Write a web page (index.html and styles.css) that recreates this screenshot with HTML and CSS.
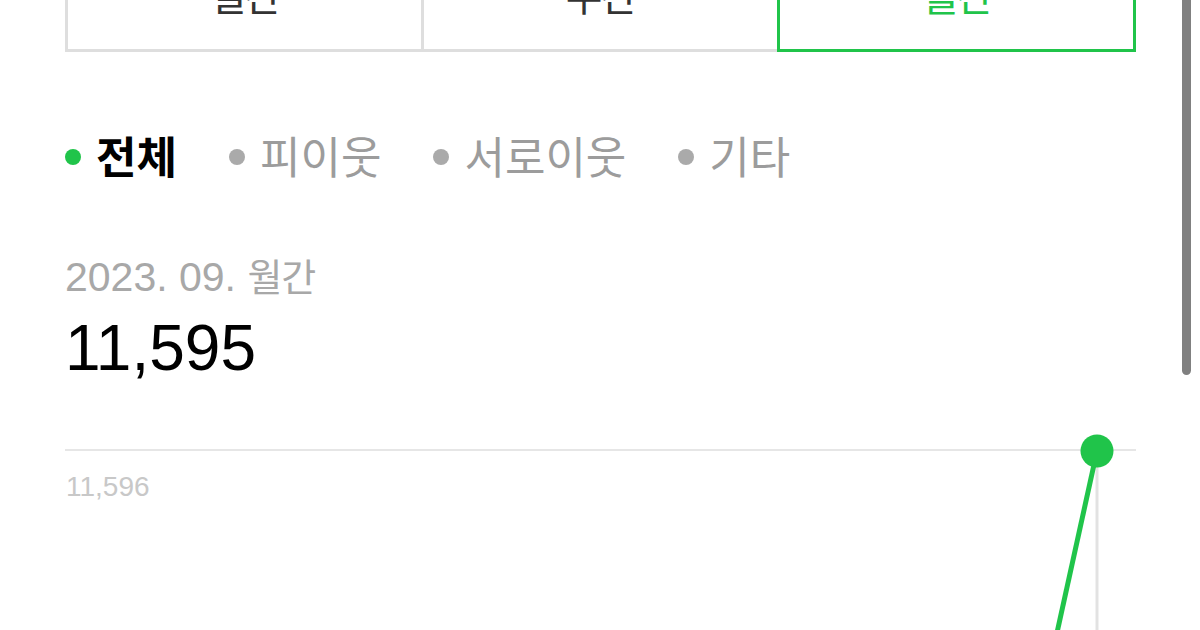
FILE: index.html
```html
<!DOCTYPE html>
<html lang="ko">
<head>
    <meta charset="UTF-8">
    <meta name="viewport" content="width=device-width, initial-scale=1.0">
    <title>방문 통계</title>
    <link rel="stylesheet" href="styles.css">
</head>

<body>

    <main class="stats">
        <!-- 기간 탭 -->
        <div class="tabs">
            <div class="tab">일간</div>
            <div class="tab">주간</div>
            <div class="tab active">월간</div>
        </div>

        <!-- 방문자 구분 -->
        <ul class="legend">
            <li class="legend-item on"><span class="dot"></span>전체</li>
            <li class="legend-item"><span class="dot"></span>피이웃</li>
            <li class="legend-item"><span class="dot"></span>서로이웃</li>
            <li class="legend-item"><span class="dot"></span>기타</li>
        </ul>

        <p class="period">2023. 09. <span class="ko">월간</span></p>
        <p class="total">11,595</p>

        <svg class="chart" width="1071" height="240" viewBox="0 0 1071 240">
            <line x1="0" y1="30" x2="1071" y2="30" stroke="#e6e6e6" stroke-width="2"/>
            <text x="1" y="76" class="axis-label">11,596</text>
            <line x1="1032" y1="31" x2="1032" y2="240" stroke="#e2e2e2" stroke-width="3"/>
            <line x1="1032" y1="31" x2="986" y2="240" stroke="#20c44a" stroke-width="5"/>
            <circle cx="1032" cy="31" r="16.5" fill="#20c44a"/>
        </svg>
    </main>

    <div class="scroll-indicator"></div>

</body>

</html>
```

FILE: styles.css
```css
/* page */
html, body {
    margin: 0;
    height: 100%;
    overflow: hidden;
    background-color: #fff;
}

body {
    font-family: "Liberation Sans", "Noto Sans CJK KR", sans-serif;
    color: #000;
}

.stats {
    padding: 0 64px 0 65px;
}

/* tabs */
.tabs {
    display: flex;
    margin-top: -48px;
}

.tab {
    flex: 1;
    height: 100px;
    box-sizing: border-box;
    border: 3px solid #dedede;
    border-right: none;
    display: flex;
    align-items: center;
    justify-content: center;
    padding-bottom: 16px;
    font-family: "Noto Sans CJK KR", sans-serif;
    font-size: 40px;
    letter-spacing: -2px;
    color: #333;
}

.tab:last-child {
    border-right: 3px solid #dedede;
}

.tab.active {
    border: 3px solid #20c44a;
    color: #20c44a;
}

/* legend */
.legend {
    list-style: none;
    margin: 73px 0 0;
    padding: 0;
    display: flex;
    gap: 52px;
    height: 60px;
}

.legend-item {
    display: flex;
    align-items: center;
    gap: 15px;
    font-family: "Noto Sans CJK KR", sans-serif;
    font-size: 44px;
    letter-spacing: 0;
    line-height: 60px;
    color: #9c9c9c;
}

.legend-item .dot {
    width: 16px;
    height: 16px;
    border-radius: 50%;
    background-color: #aaa;
    margin-top: 4px;
}

.legend-item.on {
    color: #000;
    font-weight: 700;
}

.legend-item.on .dot {
    background-color: #20c44a;
}

/* summary */
.period {
    margin: 66px 0 0;
    font-size: 41px;
    line-height: 48px;
    color: #a8a8a8;
}

.period .ko {
    font-family: "Noto Sans CJK KR", sans-serif;
    font-size: 38px;
    letter-spacing: -1px;
}

.total {
    margin: 12px 0 0;
    font-size: 64px;
    line-height: 70px;
}

/* chart */
.chart {
    display: block;
    margin-top: 37px;
    overflow: visible;
}

.axis-label {
    font-family: "Liberation Sans", sans-serif;
    font-size: 28px;
    fill: #c8c8c8;
}

.scroll-indicator {
    position: fixed;
    top: -10px;
    right: 9px;
    width: 9px;
    height: 385px;
    border-radius: 5px;
    background-color: #808080;
}
```
